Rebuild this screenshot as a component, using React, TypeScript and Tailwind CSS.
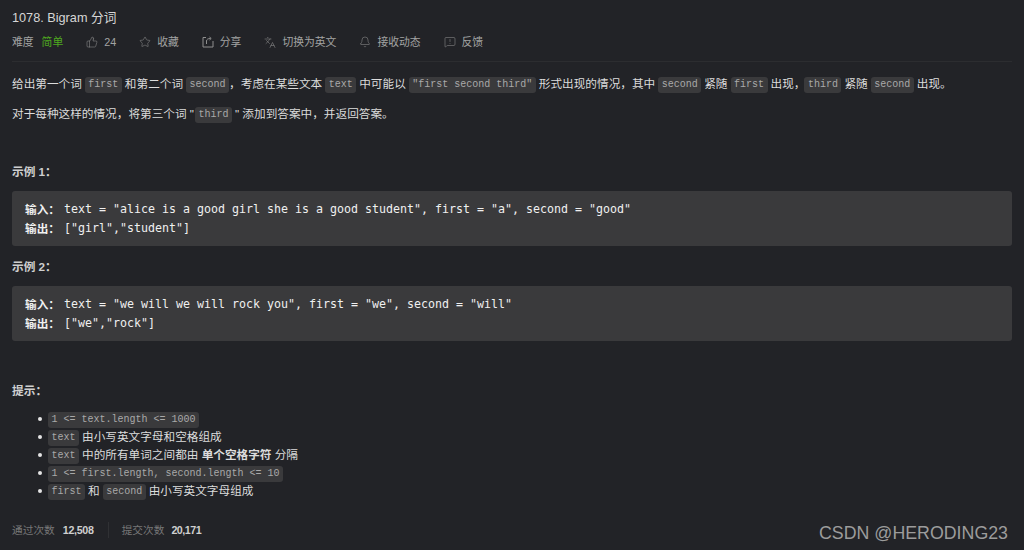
import type { ReactNode } from "react"
import { Bell, Languages, MessageSquareWarning, Star, ThumbsUp } from "lucide-react"

const SANS = "font-['Liberation_Sans','Noto_Sans_CJK_SC',sans-serif]"

function Code({ children }: { children: ReactNode }) {
  return (
    <code className="mx-[3px] inline-block h-4 rounded-[3px] bg-[#3a3a3c] px-[3.5px] align-middle font-['Liberation_Mono',monospace] text-[10px] leading-4 text-[#a9a9a9]">
      {children}
    </code>
  )
}

function ShareIcon() {
  return (
    <svg width="12" height="12" viewBox="0 0 12 12" fill="none" stroke="currentColor" strokeWidth="1">
      <path d="M4 1.5H1v9.5h10V5" />
      <path d="M4.5 8V5C4.5 3.4 6 2.5 8.5 2.5" />
      <path d="M7.5 1 9.2 2.5 7.5 4" />
    </svg>
  )
}

function MetaItem({ icon, label }: { icon: ReactNode; label: string }) {
  return (
    <div className="flex items-center gap-[6px]">
      <span className="flex w-[12px] justify-center text-[#8f8f8f]">{icon}</span>
      <span>{label}</span>
    </div>
  )
}

function Example({ title, input, output }: { title: string; input: string; output: string }) {
  return (
    <>
      <div className="h-[19px] text-[11.7px] leading-[19px] font-bold text-[#cfcfcf]">{title}</div>
      <pre className="mt-[10px] h-[55px] rounded-[3px] bg-[#3a3a3c] px-[13px] pt-[9px] font-['DejaVu_Sans_Mono','Noto_Sans_CJK_SC',monospace] text-[11.63px] leading-[18.5px] text-[#f0f0f0]">
        <div className="flex h-[19px] items-center">
          <strong className="w-[39px] shrink-0 font-['Noto_Sans_CJK_SC',sans-serif]">输入：</strong>
          {input}
        </div>
        <div className="flex h-[18px] items-center">
          <strong className="w-[39px] shrink-0 font-['Noto_Sans_CJK_SC',sans-serif]">输出：</strong>
          {output}
        </div>
      </pre>
    </>
  )
}

function Item({ children }: { children: ReactNode }) {
  return (
    <li className="flex h-[18px] items-center gap-[6px]">
      <span className="h-1 w-1 shrink-0 rounded-full bg-[#e4e4e4]" />
      <div className="-ml-[3px] whitespace-nowrap">{children}</div>
    </li>
  )
}

export default function App() {
  return (
    <div className={`relative h-[550px] w-[1024px] overflow-hidden bg-[#222327] px-3 text-[#dcdcdc] ${SANS}`}>
      <h1 className="pt-[9px] text-[12.7px] leading-[19px] font-normal text-[#d6d6d6]">1078. Bigram 分词</h1>

      <div className="mt-[5px] flex h-[18px] items-center text-[10.8px] text-[#a3a3a3]">
        <span>难度</span>
        <span className="ml-[8px] text-[#4fa81f]">简单</span>
        <div className="ml-[23px] flex items-center gap-[23px]">
          <MetaItem icon={<ThumbsUp size={12} strokeWidth={1.1} />} label="24" />
          <MetaItem icon={<Star size={12} strokeWidth={1.1} />} label="收藏" />
          <MetaItem icon={<ShareIcon />} label="分享" />
          <MetaItem icon={<Languages size={13} strokeWidth={1.1} />} label="切换为英文" />
          <MetaItem icon={<Bell size={12} strokeWidth={1.1} />} label="接收动态" />
          <MetaItem icon={<MessageSquareWarning size={12} strokeWidth={1.1} />} label="反馈" />
        </div>
      </div>

      <div className="mt-[10px] h-px bg-[#2c2d30]" />

      <p className="mt-[13px] h-[18px] text-[11.65px] leading-[18px] whitespace-nowrap">
        给出第一个词<Code>first</Code>和第二个词<Code>second</Code>
        <span className="-ml-[3px]">，</span>考虑在某些文本<Code>text</Code>中可能以
        <Code>"first second third"</Code>形式出现的情况，其中<Code>second</Code>紧随<Code>first</Code>出现，
        <span className="-ml-[4px]" />
        <Code>third</Code>紧随<Code>second</Code>出现。
      </p>
      <p className="mt-[12px] h-[18px] text-[11.65px] leading-[18px] whitespace-nowrap">
        对于每种这样的情况，将第三个词 <span className="-mr-[2px]">"</span><Code>third</Code>" 添加到答案中，并返回答案。
      </p>

      <div className="mt-[39px]">
        <Example
          title="示例 1："
          input={'text = "alice is a good girl she is a good student", first = "a", second = "good"'}
          output={'["girl","student"]'}
        />
      </div>
      <div className="mt-[11px]">
        <Example
          title="示例 2："
          input={'text = "we will we will rock you", first = "we", second = "will"'}
          output={'["we","rock"]'}
        />
      </div>

      <div className="mt-[40px] h-[19px] text-[11.7px] leading-[19px] font-bold text-[#cfcfcf]">提示：</div>

      <ul className="mt-[10px] pl-[26px] text-[11.65px] leading-[18px]">
        <Item><Code>1 &lt;= text.length &lt;= 1000</Code></Item>
        <Item><Code>text</Code>由小写英文字母和空格组成</Item>
        <Item><Code>text</Code>中的所有单词之间都由 <strong>单个空格字符</strong> 分隔</Item>
        <Item><Code>1 &lt;= first.length, second.length &lt;= 10</Code></Item>
        <Item><Code>first</Code>和<Code>second</Code>由小写英文字母组成</Item>
      </ul>

      <div className="mt-[21px] flex h-[18px] items-center text-[10.7px]">
        <span className="text-[#777777]">通过次数</span>
        <span className="ml-[8px] font-bold tracking-[-0.3px] text-[#cfcfcf]">12,508</span>
        <span className="mx-[14px] h-[16px] w-px bg-[#303134]" />
        <span className="-ml-[1px] text-[#777777]">提交次数</span>
        <span className="ml-[7px] font-bold tracking-[-0.5px] text-[#cfcfcf]">20,171</span>
      </div>

      <div className="absolute right-[16px] bottom-[6px] font-['Liberation_Sans',sans-serif] text-[17.8px] leading-[22px] text-[#9c9c9c]">
        CSDN @HERODING23
      </div>
    </div>
  )
}
